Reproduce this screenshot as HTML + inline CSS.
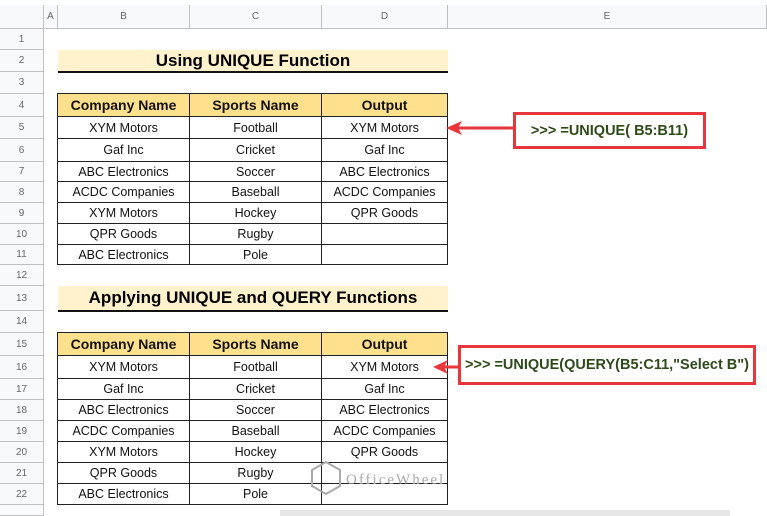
<!DOCTYPE html>
<html><head><style>
body{margin:0;width:767px;height:516px;overflow:hidden;background:#fff;font-family:"Liberation Sans",Arial,sans-serif;position:relative}
.a{position:absolute;box-sizing:border-box}
.hd{background:#f8f9fa;border-right:1px solid #c0c0c0;border-bottom:1px solid #c0c0c0;color:#666;font-size:10px;display:flex;align-items:center;justify-content:center}
.c{display:flex;align-items:center;justify-content:center;font-size:12.5px;color:#111;border:1px solid #222;margin:-1px 0 0 -1px}
.h{background:#ffe08c;font-weight:bold;font-size:14px}
.t{background:#fff2cc;border-bottom:2px solid #111;font-weight:bold;font-size:17px;display:flex;align-items:center;justify-content:center}
.box{border:3px solid #e8363d;font-weight:bold;color:#2f4a1a;font-size:14.5px;display:flex;align-items:center;justify-content:center;white-space:nowrap}
</style></head><body>
<div id="g"></div>
<div class="a t" style="left:58px;top:50px;width:390px;height:23px">Using UNIQUE Function</div>
<div class="a t" style="left:58px;top:286px;width:390px;height:26px">Applying UNIQUE and QUERY Functions</div>
<div id="tb"></div>
<div class="a box" style="left:513px;top:112px;width:193px;height:37px">&gt;&gt;&gt; =UNIQUE( B5:B11)</div>
<div class="a box" style="left:458px;top:345px;width:298px;height:40px">&gt;&gt;&gt; =UNIQUE(QUERY(B5:C11,"Select B")</div>
<svg class="a" style="left:0;top:0" width="767" height="516">
<line x1="458" y1="128" x2="513" y2="128" stroke="#e8363d" stroke-width="3"/>
<polygon points="446,128 462,121 458,128 462,135" fill="#e8363d"/>
<line x1="444" y1="367" x2="458" y2="367" stroke="#e8363d" stroke-width="3"/>
<polygon points="433,367 448,360 444,367 448,374" fill="#e8363d"/>
<rect x="280" y="510" width="450" height="6" fill="#e6e6e6"/>
<polygon points="326,462 340,470 340,486 326,494 312,486 312,470" fill="none" stroke="#aaa" stroke-width="2"/>
<text x="346" y="484" font-family="Liberation Serif" font-size="15" fill="#aaa" letter-spacing="2">OfficeWheel</text>
</svg>
<script>
var R=[29,50,72,94,117,139,162,182,203,224,245,265,286,311,333,356,379,400,421,442,463,484,505];
var C=[[44,58,'A'],[58,190,'B'],[190,322,'C'],[322,448,'D'],[448,767,'E']];
var h='<div class="a hd" style="left:0;top:5px;width:44px;height:24px"></div>';
C.forEach(function(c){h+='<div class="a hd" style="left:'+c[0]+'px;top:5px;width:'+(c[1]-c[0])+'px;height:24px">'+c[2]+'</div>'});
for(var i=0;i<22;i++)h+='<div class="a hd" style="left:0;top:'+R[i]+'px;width:44px;height:'+(R[i+1]-R[i])+'px">'+(i+1)+'</div>';
h+='<div class="a hd" style="left:0;top:505px;width:44px;height:11px"></div>';
document.getElementById('g').innerHTML=h;
var A=[['XYM Motors','Football','XYM Motors'],['Gaf Inc','Cricket','Gaf Inc'],['ABC Electronics','Soccer','ABC Electronics'],['ACDC Companies','Baseball','ACDC Companies'],['XYM Motors','Hockey','QPR Goods'],['QPR Goods','Rugby',''],['ABC Electronics','Pole','']];
var X=[58,190,322,448];
function tab(s){var o='';var hdr=['Company Name','Sports Name','Output'];
for(var j=0;j<3;j++)o+='<div class="a c h" style="left:'+X[j]+'px;top:'+R[s]+'px;width:'+(X[j+1]-X[j]+1)+'px;height:'+(R[s+1]-R[s]+1)+'px">'+hdr[j]+'</div>';
for(var i=0;i<7;i++)for(var j=0;j<3;j++)o+='<div class="a c" style="left:'+X[j]+'px;top:'+R[s+1+i]+'px;width:'+(X[j+1]-X[j]+1)+'px;height:'+(R[s+2+i]-R[s+1+i]+1)+'px">'+A[i][j]+'</div>';
return o}
document.getElementById('tb').innerHTML=tab(3)+tab(14);
</script>
</body></html>
